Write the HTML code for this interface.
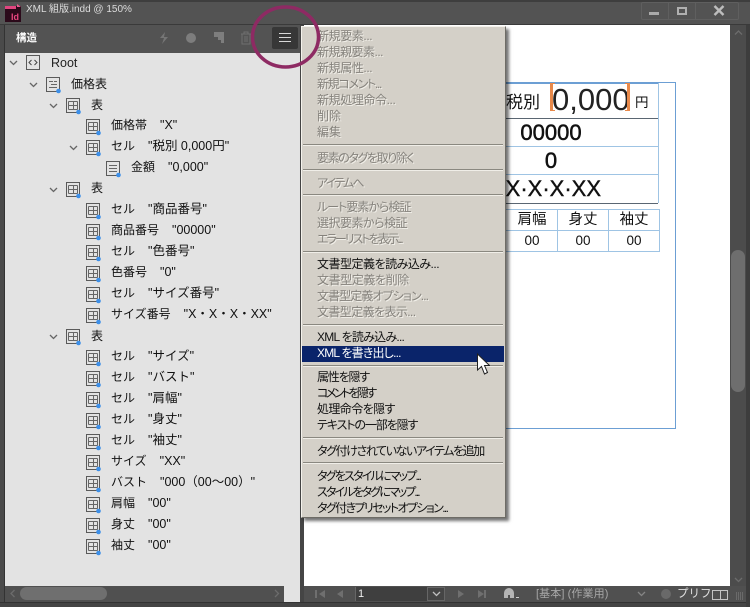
<!DOCTYPE html>
<html lang="ja"><head><meta charset="utf-8"><title>XML</title>
<style>
*{box-sizing:border-box}
html,body{margin:0;padding:0}
body{width:750px;height:607px;position:relative;overflow:hidden;background:#535353;font-family:"Liberation Sans","Noto Sans CJK JP",sans-serif;color:#111}
.a{position:absolute}
.t{position:absolute;white-space:nowrap;line-height:16px;font-size:12px;height:16px}
.t .v{margin-left:13px;font-size:12.5px}
.ic{position:absolute;width:17px;height:18px}
.m{position:absolute;left:317px;white-space:nowrap;font-size:12px;line-height:16px;height:16px;color:#111;font-feature-settings:"palt"}
.d{color:#85827c;text-shadow:1px 1px 0 #f2f0ea}
.s{position:absolute;left:303px;width:200px;height:2px;background:#8a8880;border-bottom:1px solid #f0eee8}
.c{position:absolute;text-align:center;white-space:nowrap}
.h{position:absolute;background:#9fc4e4}
</style></head><body>
<svg width="0" height="0" style="position:absolute"><defs>
<g id="tb"><rect x="1.5" y="1.5" width="13" height="14" fill="none" stroke="#5a5a5a"/><path d="M3.5 4.500H12.500M3.500 8.500H12.500M3.500 12.500H12.500M3.500 4.500V12.500M8.500 4.500V12.500M12.500 4.500V12.500" fill="none" stroke="#666"/><circle cx="13.500" cy="15" r="2.300" fill="#3d8fe8"/></g>
<g id="ls"><rect x="1.5" y="1.5" width="13" height="14" fill="none" stroke="#5a5a5a"/><path d="M4 5.500H12M4 8.500H12M4 11.500H12" stroke="#666"/><circle cx="13.500" cy="15" r="2.300" fill="#3d8fe8"/></g>
<path id="ch" d="M1 1L4.500 4.500L8 1" fill="none" stroke="#666" stroke-width="1.300"/>
</defs></svg>

<!-- title bar -->
<div class="a" style="left:0;top:0;width:750px;height:2px;background:#3e3e3e"></div>
<div class="a" style="left:0;top:24px;width:750px;height:1px;background:#3a3a3a"></div>
<svg class="a" style="left:5px;top:4px" width="17" height="18"><rect x="0" y="2" width="16" height="16" fill="#2b0a1a"/><rect x="0" y="2" width="11" height="3" fill="#e0457f"/><path d="M12 0L16 3H12Z" fill="#ea5a92"/><text x="6" y="16" font-size="9" font-weight="bold" fill="#e8467f" font-family="Liberation Sans">Id</text></svg>
<div class="t" style="left:26px;top:2px;color:#dcdcdc;font-size:10px">XML 組版.indd @ 150%</div>
<div class="a" style="left:641px;top:2px;width:98px;height:18px;border:1px solid #5f5f5f;border-radius:2px"></div>
<div class="a" style="left:668px;top:3px;width:1px;height:16px;background:#5f5f5f"></div>
<div class="a" style="left:695px;top:3px;width:1px;height:16px;background:#5f5f5f"></div>
<div class="a" style="left:649px;top:12px;width:10px;height:3px;background:#aaa"></div>
<div class="a" style="left:677px;top:7px;width:10px;height:8px;border:2px solid #b0b0b0"></div>
<svg class="a" style="left:713px;top:5px" width="12" height="11"><path d="M1.500 1L10.500 10M10.500 1L1.500 10" stroke="#bdbdbd" stroke-width="2.400"/></svg>

<!-- left panel -->
<div class="a" style="left:0;top:25px;width:5px;height:582px;background:#4a4a4a"></div>
<div class="a" style="left:4px;top:25px;width:1px;height:578px;background:#333"></div>
<div class="a" style="left:5px;top:25px;width:295px;height:28px;background:#535353"></div>
<div class="t" style="left:16px;top:30px;color:#fff;font-size:10.500px;font-weight:bold">構造</div>
<svg class="a" style="left:158px;top:31px" width="12" height="14"><path d="M7 1L2 7H6L4 13L10 6H6Z" fill="#757575"/></svg>
<div class="a" style="left:186px;top:33px;width:10px;height:10px;border-radius:50%;background:#7d7d7d"></div>
<svg class="a" style="left:214px;top:32px" width="11" height="12"><path d="M0 0H10V11H7V8H4V5H0Z" fill="#7e7e7e"/></svg>
<svg class="a" style="left:240px;top:31px" width="12" height="14"><path d="M1 3H11M4 3V1H8V3M2 3V13H10V3M5 5V11M7 5V11" fill="none" stroke="#6f6f6f"/></svg>
<div class="a" style="left:272px;top:27px;width:26px;height:22px;background:#373737;border-radius:2px"></div>
<div class="a" style="left:279px;top:33px;width:12px;height:1px;background:#d8d8d8;box-shadow:0 4px 0 #d8d8d8,0 8px 0 #d8d8d8"></div>

<div class="a" style="left:5px;top:53px;width:295px;height:549px;background:#e3e3e3"></div>
<div class="a" style="left:5px;top:586px;width:279px;height:16px;background:#505050"></div>
<div class="a" style="left:20px;top:587px;width:87px;height:13px;background:#6f6f6f;border-radius:7px"></div>
<svg class="a" style="left:10px;top:589px" width="6" height="9"><path d="M4.500 1L1 4.500L4.500 8" fill="none" stroke="#6c6c6c" stroke-width="1.300"/></svg>
<svg class="a" style="left:274px;top:589px" width="6" height="9"><path d="M1 1L4.500 4.500L1 8" fill="none" stroke="#6c6c6c" stroke-width="1.300"/></svg>
<div class="a" style="left:0;top:602px;width:750px;height:5px;background:#444;border-top:1px solid #333"></div>

<!-- tree -->
<svg class="a" style="left:9px;top:60px" width="9" height="6"><use href="#ch"/></svg>
<svg class="a" style="left:29px;top:82px" width="9" height="6"><use href="#ch"/></svg>
<svg class="a" style="left:49px;top:103px" width="9" height="6"><use href="#ch"/></svg>
<svg class="a" style="left:69px;top:145px" width="9" height="6"><use href="#ch"/></svg>
<svg class="a" style="left:49px;top:187px" width="9" height="6"><use href="#ch"/></svg>
<svg class="a" style="left:49px;top:334px" width="9" height="6"><use href="#ch"/></svg>

<svg class="ic" style="left:25px;top:54px"><rect x="1.500" y="1.500" width="13" height="14" fill="none" stroke="#5a5a5a"/><path d="M6.500 6L4 8.500L6.500 11M9.500 6L12 8.500L9.500 11" fill="none" stroke="#444"/></svg>
<div class="t" style="left:51px;top:55px;font-size:12.500px;color:#222">Root</div>
<svg class="ic" style="left:45px;top:76px"><rect x="1.500" y="1.500" width="13" height="14" fill="none" stroke="#5a5a5a"/><path d="M4 5.500H8M9 5.500H12M6 8.500H12M4 11.500H12" stroke="#666"/><circle cx="13.500" cy="15" r="2.300" fill="#3d8fe8"/></svg>
<div class="t" style="left:71px;top:76px">価格表</div>
<svg class="ic" style="left:65px;top:97px"><use href="#tb"/></svg><div class="t" style="left:91px;top:97px">表</div>
<svg class="ic" style="left:85px;top:118px"><use href="#tb"/></svg><div class="t" style="left:111px;top:117px">価格帯<span class="v">"X"</span></div>
<svg class="ic" style="left:85px;top:139px"><use href="#tb"/></svg><div class="t" style="left:111px;top:138px">セル<span class="v">"税別 0,000円"</span></div>
<svg class="ic" style="left:105px;top:160px"><use href="#ls"/></svg><div class="t" style="left:131px;top:159px">金額<span class="v">"0,000"</span></div>
<svg class="ic" style="left:65px;top:181px"><use href="#tb"/></svg><div class="t" style="left:91px;top:180px">表</div>
<svg class="ic" style="left:85px;top:202px"><use href="#tb"/></svg><div class="t" style="left:111px;top:201px">セル<span class="v">"商品番号"</span></div>
<svg class="ic" style="left:85px;top:223px"><use href="#tb"/></svg><div class="t" style="left:111px;top:222px">商品番号<span class="v">"00000"</span></div>
<svg class="ic" style="left:85px;top:244px"><use href="#tb"/></svg><div class="t" style="left:111px;top:243px">セル<span class="v">"色番号"</span></div>
<svg class="ic" style="left:85px;top:265px"><use href="#tb"/></svg><div class="t" style="left:111px;top:264px">色番号<span class="v">"0"</span></div>
<svg class="ic" style="left:85px;top:286px"><use href="#tb"/></svg><div class="t" style="left:111px;top:285px">セル<span class="v">"サイズ番号"</span></div>
<svg class="ic" style="left:85px;top:307px"><use href="#tb"/></svg><div class="t" style="left:111px;top:306px">サイズ番号<span class="v">"X・X・X・XX"</span></div>
<svg class="ic" style="left:65px;top:328px"><use href="#tb"/></svg><div class="t" style="left:91px;top:328px">表</div>
<svg class="ic" style="left:85px;top:349px"><use href="#tb"/></svg><div class="t" style="left:111px;top:348px">セル<span class="v">"サイズ"</span></div>
<svg class="ic" style="left:85px;top:370px"><use href="#tb"/></svg><div class="t" style="left:111px;top:369px">セル<span class="v">"バスト"</span></div>
<svg class="ic" style="left:85px;top:391px"><use href="#tb"/></svg><div class="t" style="left:111px;top:390px">セル<span class="v">"肩幅"</span></div>
<svg class="ic" style="left:85px;top:412px"><use href="#tb"/></svg><div class="t" style="left:111px;top:411px">セル<span class="v">"身丈"</span></div>
<svg class="ic" style="left:85px;top:433px"><use href="#tb"/></svg><div class="t" style="left:111px;top:432px">セル<span class="v">"袖丈"</span></div>
<svg class="ic" style="left:85px;top:454px"><use href="#tb"/></svg><div class="t" style="left:111px;top:453px">サイズ<span class="v">"XX"</span></div>
<svg class="ic" style="left:85px;top:475px"><use href="#tb"/></svg><div class="t" style="left:111px;top:474px">バスト<span class="v">"000（00～00）"</span></div>
<svg class="ic" style="left:85px;top:496px"><use href="#tb"/></svg><div class="t" style="left:111px;top:495px">肩幅<span class="v">"00"</span></div>
<svg class="ic" style="left:85px;top:517px"><use href="#tb"/></svg><div class="t" style="left:111px;top:516px">身丈<span class="v">"00"</span></div>
<svg class="ic" style="left:85px;top:538px"><use href="#tb"/></svg><div class="t" style="left:111px;top:537px">袖丈<span class="v">"00"</span></div>

<!-- canvas -->
<div class="a" style="left:300px;top:25px;width:4px;height:577px;background:#454545"></div>
<div class="a" style="left:304px;top:25px;width:426px;height:561px;background:#fff"></div>
<div class="a" style="left:730px;top:25px;width:16px;height:561px;background:#4c4c4c"></div>
<div class="a" style="left:731px;top:250px;width:14px;height:142px;background:#6e6e6e;border-radius:7px"></div>
<svg class="a" style="left:734px;top:30px" width="9" height="6"><path d="M1 4.500L4.500 1L8 4.500" fill="none" stroke="#6c6c6c" stroke-width="1.300"/></svg>
<svg class="a" style="left:734px;top:577px" width="9" height="6"><path d="M1 1L4.500 4.500L8 1" fill="none" stroke="#6c6c6c" stroke-width="1.300"/></svg>
<div class="a" style="left:746px;top:25px;width:4px;height:582px;background:#3d3d3d"></div>

<!-- document -->
<div class="a" style="left:480px;top:82px;width:196px;height:347px;border:1px solid #6c9fd4"></div>
<div class="a" style="left:480px;top:83px;width:178px;height:1px;background:#6c9fd4"></div>
<div class="h" style="left:658px;top:83px;width:1px;height:120px"></div>
<div class="a" style="left:480px;top:118px;width:178px;height:1px;background:#5a6672"></div>
<div class="h" style="left:480px;top:146px;width:178px;height:1px"></div>
<div class="h" style="left:480px;top:174px;width:178px;height:1px"></div>
<div class="a" style="left:480px;top:203px;width:178px;height:1px;background:#5a6672"></div>
<div class="c" style="left:506px;top:91px;font-size:17px;line-height:24px">税別</div>
<div class="c" style="left:552px;top:79px;font-size:31px;line-height:42px;width:77px;color:#222">0,000</div>
<div class="a" style="left:550px;top:83px;width:5px;height:28px;border:solid #e8894a;border-width:1px 0 1px 3px"></div>
<div class="a" style="left:625px;top:83px;width:5px;height:28px;border:solid #e8894a;border-width:1px 3px 1px 0"></div>
<div class="c" style="left:635px;top:93px;font-size:13.500px;line-height:20px">円</div>
<div class="c" style="left:511px;top:120px;width:80px;font-size:22px;-webkit-text-stroke:.5px #111;line-height:26px">00000</div>
<div class="c" style="left:511px;top:148px;width:80px;font-size:22px;-webkit-text-stroke:.5px #111;line-height:26px">0</div>
<div class="c" style="right:149px;top:175px;font-size:22px;line-height:28px;-webkit-text-stroke:.4px #111;color:#111">X·X·X·XX</div>
<div class="h" style="left:480px;top:209px;width:179px;height:1px"></div>
<div class="h" style="left:480px;top:230px;width:179px;height:1px"></div>
<div class="h" style="left:480px;top:251px;width:179px;height:1px"></div>
<div class="h" style="left:557px;top:209px;width:1px;height:43px"></div>
<div class="h" style="left:608px;top:209px;width:1px;height:43px"></div>
<div class="h" style="left:659px;top:209px;width:1px;height:43px"></div>
<div class="c" style="left:507px;top:210px;width:50px;font-size:14.500px;line-height:20px">肩幅</div>
<div class="c" style="left:558px;top:210px;width:50px;font-size:14.500px;line-height:20px">身丈</div>
<div class="c" style="left:609px;top:210px;width:50px;font-size:14.500px;line-height:20px">袖丈</div>
<div class="c" style="left:507px;top:232px;width:50px;font-size:13.500px;line-height:18px">00</div>
<div class="c" style="left:558px;top:232px;width:50px;font-size:13.500px;line-height:18px">00</div>
<div class="c" style="left:609px;top:232px;width:50px;font-size:13.500px;line-height:18px">00</div>

<!-- menu -->
<div class="a" style="left:301px;top:26px;width:205px;height:492px;background:#d4d0c8;border-top:1px solid #f4f2ec;border-left:1px solid #f4f2ec;border-right:1px solid #6e6c66;border-bottom:1px solid #6e6c66;box-shadow:3px 3px 3px rgba(0,0,0,.55)"></div>
<div class="m d" style="top:28px;letter-spacing:-.4px">新規要素...</div>
<div class="m d" style="top:44px;letter-spacing:-.5px">新規親要素...</div>
<div class="m d" style="top:60px;letter-spacing:-.4px">新規属性...</div>
<div class="m d" style="top:76px;letter-spacing:-1.3px">新規コメント...</div>
<div class="m d" style="top:92px;letter-spacing:-.4px">新規処理命令...</div>
<div class="m d" style="top:108px">削除</div>
<div class="m d" style="top:124px">編集</div>
<div class="s" style="top:144px"></div>
<div class="m d" style="top:150px;letter-spacing:-1.4px">要素のタグを取り除く</div>
<div class="s" style="top:169px"></div>
<div class="m d" style="top:175px;letter-spacing:-1.8px">アイテムへ</div>
<div class="s" style="top:194px"></div>
<div class="m d" style="top:199px;letter-spacing:-1px">ルート要素から検証</div>
<div class="m d" style="top:215px;letter-spacing:-.5px">選択要素から検証</div>
<div class="m d" style="top:231px;letter-spacing:-2px">エラーリストを表示...</div>
<div class="s" style="top:251px"></div>
<div class="m" style="top:256px;letter-spacing:-.5px">文書型定義を読み込み...</div>
<div class="m d" style="top:272px;letter-spacing:-.4px">文書型定義を削除</div>
<div class="m d" style="top:288px;letter-spacing:-.9px">文書型定義オプション...</div>
<div class="m d" style="top:304px;letter-spacing:-.6px">文書型定義を表示...</div>
<div class="s" style="top:324px"></div>
<div class="m" style="top:329px;letter-spacing:-.75px">XML を読み込み...</div>
<div class="a" style="left:302px;top:346px;width:202px;height:16px;background:#0a246a"></div>
<div class="m" style="top:345px;color:#fff;letter-spacing:-.8px">XML を書き出し...</div>
<div class="s" style="top:365px"></div>
<div class="m" style="top:369px;letter-spacing:-1.2px">属性を隠す</div>
<div class="m" style="top:385px;letter-spacing:-2.6px">コメントを隠す</div>
<div class="m" style="top:401px;letter-spacing:-.6px">処理命令を隠す</div>
<div class="m" style="top:417px;letter-spacing:-1.100px">テキストの一部を隠す</div>
<div class="s" style="top:437px"></div>
<div class="m" style="top:443px;letter-spacing:-1.4px">タグ付けされていないアイテムを追加</div>
<div class="s" style="top:462px"></div>
<div class="m" style="top:468px;letter-spacing:-1.8px">タグをスタイルにマップ...</div>
<div class="m" style="top:484px;letter-spacing:-1.9px">スタイルをタグにマップ...</div>
<div class="m" style="top:500px;letter-spacing:-1.6px">タグ付きプリセットオプション...</div>
<svg class="a" style="left:476px;top:353px" width="14" height="23"><path d="M1.500 1V17L5.500 13.500L8.500 21L11.500 19.500L8.500 12.500H13.500Z" fill="#fff" stroke="#222"/></svg>

<!-- purple annotation -->
<svg class="a" style="left:245px;top:0" width="82" height="74"><ellipse cx="40.500" cy="37" rx="33" ry="30" fill="none" stroke="#8e2a63" stroke-width="3.500"/></svg>

<!-- status bar -->
<div class="a" style="left:304px;top:586px;width:442px;height:16px;background:#505050"></div>
<svg class="a" style="left:314px;top:588px" width="180" height="12"><g fill="#6f6f6f"><rect x="1" y="2" width="2" height="8"/><path d="M11 2V10L5 6Z"/><path d="M29 2V10L23 6Z"/><path d="M144 2V10L150 6Z"/><path d="M164 2V10L170 6Z"/><rect x="170" y="2" width="2" height="8"/></g></svg>
<div class="a" style="left:355px;top:587px;width:72px;height:14px;background:#3f3f3f;border-left:1px solid #666"></div>
<div class="t" style="left:358px;top:586px;color:#eee;font-size:11px">1</div>
<div class="a" style="left:427px;top:587px;width:18px;height:14px;background:#454545;border:1px solid #666"></div>
<svg class="a" style="left:432px;top:591px" width="9" height="6"><path d="M1 1L4.500 4.500L8 1" fill="none" stroke="#c0c0c0" stroke-width="1.300"/></svg>
<svg class="a" style="left:503px;top:587px" width="16" height="13"><path d="M1 11V6A5 5 0 0 1 11 6V11H7V8H5V11Z" fill="#b4b4b4"/><rect x="13" y="10" width="3" height="1" fill="#ccc"/></svg>
<div class="t" style="left:536px;top:586px;color:#a8a8a8;font-size:11px;letter-spacing:.1px">[基本] (作業用)</div>
<svg class="a" style="left:637px;top:591px" width="9" height="6"><path d="M1 1L4.500 4.500L8 1" fill="none" stroke="#858585" stroke-width="1.300"/></svg>
<div class="a" style="left:661px;top:589px;width:10px;height:10px;border-radius:50%;background:#696969"></div>
<div class="t" style="left:677px;top:586px;color:#e0e0e0;font-size:11.500px">プリフ</div>
<div class="a" style="left:712px;top:590px;width:16px;height:10px;border:1px solid #c4c4c4"></div>
<div class="a" style="left:720px;top:590px;width:1px;height:10px;background:#c4c4c4"></div>
<div class="a" style="left:736px;top:592px;width:8px;height:8px;background:repeating-linear-gradient(90deg,#6a6a6a 0 1px,transparent 1px 2px)"></div>
</body></html>
